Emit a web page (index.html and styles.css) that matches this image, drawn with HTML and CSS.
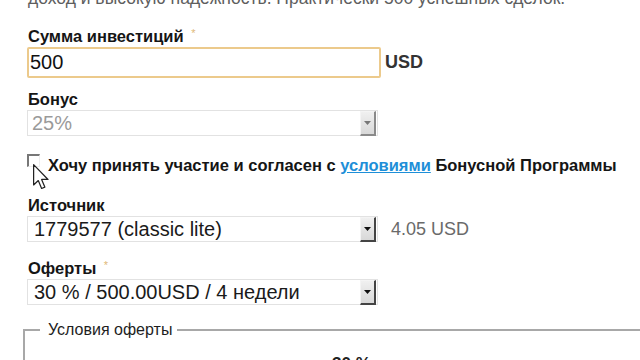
FILE: index.html
```html
<!DOCTYPE html>
<html lang="ru">
<head>
<meta charset="utf-8">
<link rel="stylesheet" href="styles.css">
</head>
<body>
<div class="page">
  <p class="intro">доход и высокую надежность. Практически 500 успешных сделок.</p>

  <div class="field f-amount">
    <label class="label">Сумма инвестиций <span class="req">*</span></label>
    <div class="row">
      <input class="amount" type="text" value="500">
      <span class="unit">USD</span>
    </div>
  </div>

  <div class="field f-bonus">
    <label class="label">Бонус</label>
    <div class="row">
      <div class="select disabled"><span class="value">25%</span><span class="arrow"><svg width="7" height="4" viewBox="0 0 7 4"><path d="M0 0h7L3.5 4z"/></svg></span></div>
    </div>
  </div>

  <div class="check-row">
    <span class="checkbox"></span>
    <span class="check-label">Хочу принять участие и согласен с <a href="#">условиями</a> Бонусной Программы</span>
    <svg class="cursor" width="16" height="26" viewBox="0 0 13 21"><path d="M0.5 0.5V17L4.3 13.4L7 19.8L9.6 18.7L7 12.5H12.2Z" fill="#fff" stroke="#222" stroke-width="1" stroke-linejoin="round"/></svg>
  </div>

  <div class="field f-source">
    <label class="label">Источник</label>
    <div class="row">
      <div class="select"><span class="value">1779577 (classic lite)</span><span class="arrow"><svg width="7" height="4" viewBox="0 0 7 4"><path d="M0 0h7L3.5 4z"/></svg></span></div>
      <span class="note">4.05 USD</span>
    </div>
  </div>

  <div class="field f-offer">
    <label class="label">Оферты <span class="req">*</span></label>
    <div class="row">
      <div class="select"><span class="value">30 % / 500.00USD / 4 недели</span><span class="arrow"><svg width="7" height="4" viewBox="0 0 7 4"><path d="M0 0h7L3.5 4z"/></svg></span></div>
    </div>
  </div>

  <fieldset class="terms">
    <legend>Условия оферты</legend>
    <div class="terms-rate">30 %</div>
  </fieldset>
</div>
</body>
</html>
```

FILE: styles.css
```css
html, body {
  margin: 0;
  padding: 0;
  background: #fff;
  overflow: hidden;
}
.page {
  width: 640px;
  height: 360px;
  overflow: hidden;
  padding-left: 27px;
  box-sizing: border-box;
  font-family: "Liberation Sans", Arial, sans-serif;
  color: #1a1a1a;
}
.intro {
  margin: -12px 0 0 1px;
  font-size: 17.5px;
  line-height: 20px;
  color: #5e5e5e;
  white-space: nowrap;
}
.field {
  display: flex;
  flex-direction: column;
}
.f-amount { margin-top: 16px; }
.f-bonus { margin-top: 12px; }
.f-source { margin-top: 22px; }
.f-offer { margin-top: 14px; }
.label {
  font-size: 16.5px;
  font-weight: bold;
  line-height: 18px;
  margin: 0 0 2px 1px;
  color: #151515;
}
.req {
  color: #e0b878;
  font-size: 11px;
  font-weight: normal;
  vertical-align: 5px;
  margin-left: 3px;
}
.row {
  display: flex;
  align-items: center;
}
.amount {
  width: 354px;
  height: 31px;
  box-sizing: border-box;
  border: 2px solid #ecca8c;
  border-radius: 2px;
  padding: 0 0 0 1px;
  margin: 0;
  font-family: "Liberation Sans", Arial, sans-serif;
  font-size: 20px;
  color: #111;
  outline: none;
  background: #fff;
}
.unit {
  margin-left: 4px;
  font-size: 18px;
  font-weight: bold;
  color: #333;
}
.select {
  width: 351px;
  height: 26px;
  box-sizing: border-box;
  border: 1px solid #e2e2e2;
  display: flex;
  align-items: center;
  justify-content: space-between;
  padding-left: 6px;
  font-size: 20px;
  color: #1a1a1a;
}
.select.disabled { color: #9a9a9a; padding-left: 4px; }
.arrow {
  width: 16px;
  height: 25px;
  box-sizing: border-box;
  margin-right: 1px;
  background: linear-gradient(#f0f0f0, #d8d8d8);
  border-top: 1px solid #f4f4f4;
  border-left: 1px solid #f4f4f4;
  border-right: 2px solid #444;
  border-bottom: 2px solid #444;
  display: flex;
  align-items: center;
  justify-content: center;
}
.arrow svg { fill: #111; }
.disabled .arrow {
  border-right-color: #8a8a8a;
  border-bottom-color: #8a8a8a;
}
.disabled .arrow svg { fill: #777; }
.note {
  margin-left: 13px;
  font-size: 18px;
  color: #6a6a6a;
}
.check-row {
  position: relative;
  display: flex;
  align-items: flex-start;
  margin-top: 20px;
  height: 18px;
}
.checkbox {
  width: 13px;
  height: 13px;
  box-sizing: border-box;
  border-top: 2px solid #777;
  border-left: 2px solid #777;
  border-right: 1px solid #eee;
  border-bottom: 1px solid #eee;
  background: #fff;
  margin-top: -2px;
  flex: none;
}
.check-label {
  margin-left: 8px;
  font-size: 16.5px;
  line-height: 18px;
  font-weight: bold;
  color: #151515;
  white-space: nowrap;
}
.check-label a {
  color: #1e8fd8;
  text-decoration: underline;
}
.cursor {
  position: absolute;
  left: 6px;
  top: 8px;
}
.terms {
  margin: 15px 0 0 -4px;
  width: 700px;
  border: none;
  border-top: 2px solid #a8a8a8;
  border-left: 2px solid #a8a8a8;
  padding: 0 0 0 15px;
}
.terms legend {
  padding: 0 5px 0 8px;
  font-size: 16px;
  line-height: 20px;
  color: #1e1e1e;
}
.terms-rate {
  margin: 14px 0 0 292px;
  font-size: 17px;
  font-weight: bold;
  color: #222;
}
```
